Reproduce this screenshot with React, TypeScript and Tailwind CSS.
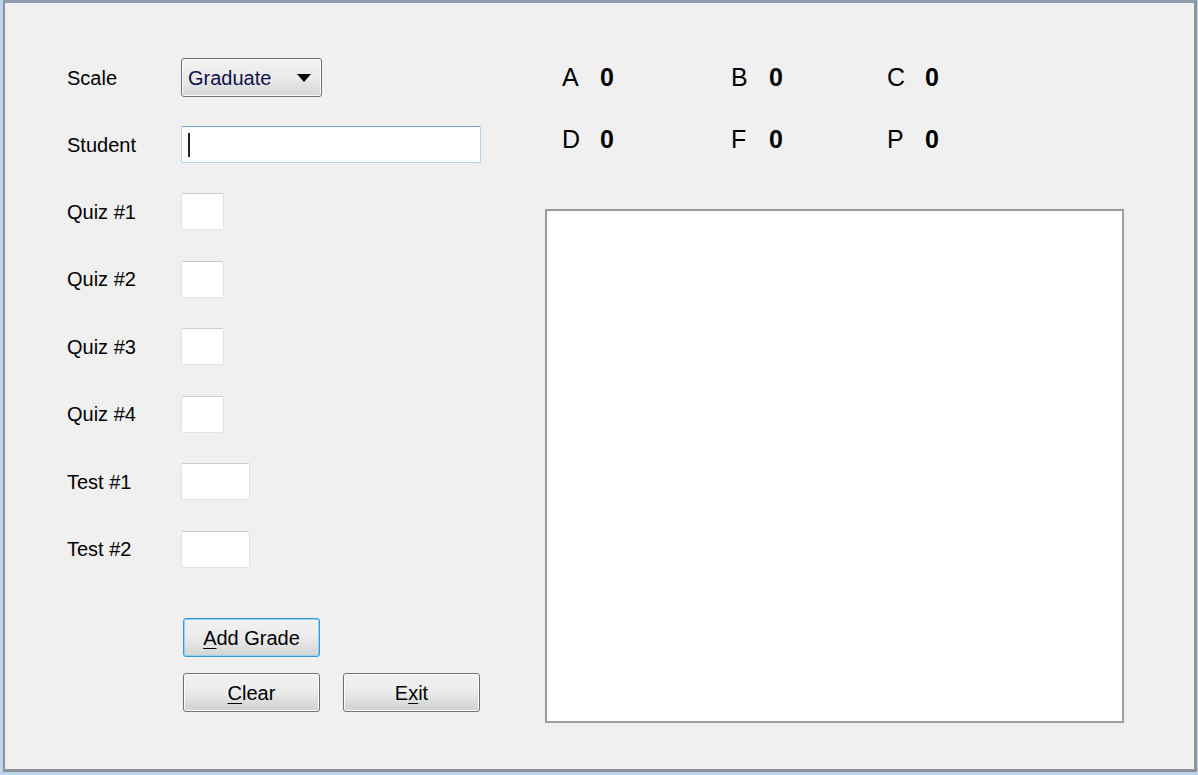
import React from "react";

const font = { fontFamily: '"Liberation Sans", Arial, sans-serif' };

function Mnemonic({ text, index }: { text: string; index: number }) {
  return (
    <>
      {text.slice(0, index)}
      <span className="underline underline-offset-[3px] decoration-1">{text[index]}</span>
      {text.slice(index + 1)}
    </>
  );
}

function WinButton({
  children,
  focused = false,
}: {
  children: React.ReactNode;
  focused?: boolean;
}) {
  return (
    <button
      className={
        focused
          ? "h-[39px] w-[137px] rounded-[3px] border border-[#3399dd] bg-gradient-to-b from-[#f2f2f2] via-[#ebebeb] to-[#d4d4d4] text-[20px] text-black shadow-[inset_0_0_0_1px_#8fd3f7]"
          : "h-[39px] w-[137px] rounded-[3px] border border-[#707070] bg-gradient-to-b from-[#f2f2f2] via-[#ebebeb] to-[#cfcfcf] text-[20px] text-black shadow-[inset_0_0_0_1px_#fcfcfc]"
      }
    >
      {children}
    </button>
  );
}

function SmallBox({ wide = false }: { wide?: boolean }) {
  return (
    <div
      className={
        (wide ? "w-[69px]" : "w-[43px]") +
        " h-[37px] rounded-[2px] border border-[#e2e3ea] border-t-[#c9cbd0] bg-white"
      }
    />
  );
}

const rows: { label: string; wide?: boolean }[] = [
  { label: "Quiz #1" },
  { label: "Quiz #2" },
  { label: "Quiz #3" },
  { label: "Quiz #4" },
  { label: "Test #1", wide: true },
  { label: "Test #2", wide: true },
];

const counts = [
  ["A", "B", "C"],
  ["D", "F", "P"],
];

export default function App() {
  return (
    <div
      className="flex h-[775px] w-[1198px] bg-[#bcd4ec] pb-[3px] pl-[3px] pr-[1px]"
      style={font}
    >
      <div className="flex flex-1 border-b-[3px] border-l-2 border-r-[3px] border-t-[3px] border-[#8e9399] border-t-[#8d9cae] bg-[#f0f0f0]">
        {/* left column */}
        <div className="w-[540px] pl-[62px] pt-[41px]">
          <div className="flex h-[67px] items-center">
            <div className="w-[114px] text-[20px] text-black">Scale</div>
            <div className="flex h-[39px] w-[141px] items-center justify-between rounded-[3px] border border-[#707070] bg-gradient-to-b from-[#f2f2f2] via-[#ebebeb] to-[#d6d6d6] pl-[6px] pr-[10px] shadow-[inset_0_0_0_1px_#fafafa]">
              <span className="text-[20px] text-[#10104a]">Graduate</span>
              <svg width="14" height="8" viewBox="0 0 14 8">
                <path d="M0 0 H14 L7 8 Z" fill="#000" />
              </svg>
            </div>
          </div>
          <div className="flex h-[67px] items-center">
            <div className="w-[114px] text-[20px] text-black">Student</div>
            <div className="flex h-[37px] w-[300px] items-center rounded-[2px] border border-[#b5d3ee] border-t-[#6f9fcc] bg-white pl-[6px]">
              <div className="h-[24px] w-[2px] bg-[#222]" />
            </div>
          </div>
          {rows.map((r) => (
            <div key={r.label} className="flex h-[67.5px] items-center">
              <div className="w-[114px] text-[20px] text-black">{r.label}</div>
              <SmallBox wide={r.wide} />
            </div>
          ))}
          <div className="ml-[116px] mt-[35px] flex flex-col gap-[16px]">
            <WinButton focused>
              <Mnemonic text="Add Grade" index={0} />
            </WinButton>
            <div className="flex gap-[23px]">
              <WinButton>
                <Mnemonic text="Clear" index={0} />
              </WinButton>
              <WinButton>
                <Mnemonic text="Exit" index={1} />
              </WinButton>
            </div>
          </div>
        </div>

        {/* right column */}
        <div className="w-[579px] pt-[55px]">
          <div className="flex flex-col gap-[22px] pl-[17px]">
            {counts.map((row, i) => (
              <div key={i} className="grid h-[40px] grid-cols-[169px_156px_auto] items-center">
                {row.map((l) => (
                  <div key={l} className="flex items-center text-[25px] text-black">
                    <span className="w-[38px]">{l}</span>
                    <span className="font-bold">0</span>
                  </div>
                ))}
              </div>
            ))}
          </div>
          <div className="mt-[49px] h-[514px] w-[579px] border-2 border-[#a0a0a0] border-l-[#9a9a9a] border-t-[#9a9a9a] bg-white" />
        </div>
      </div>
    </div>
  );
}
